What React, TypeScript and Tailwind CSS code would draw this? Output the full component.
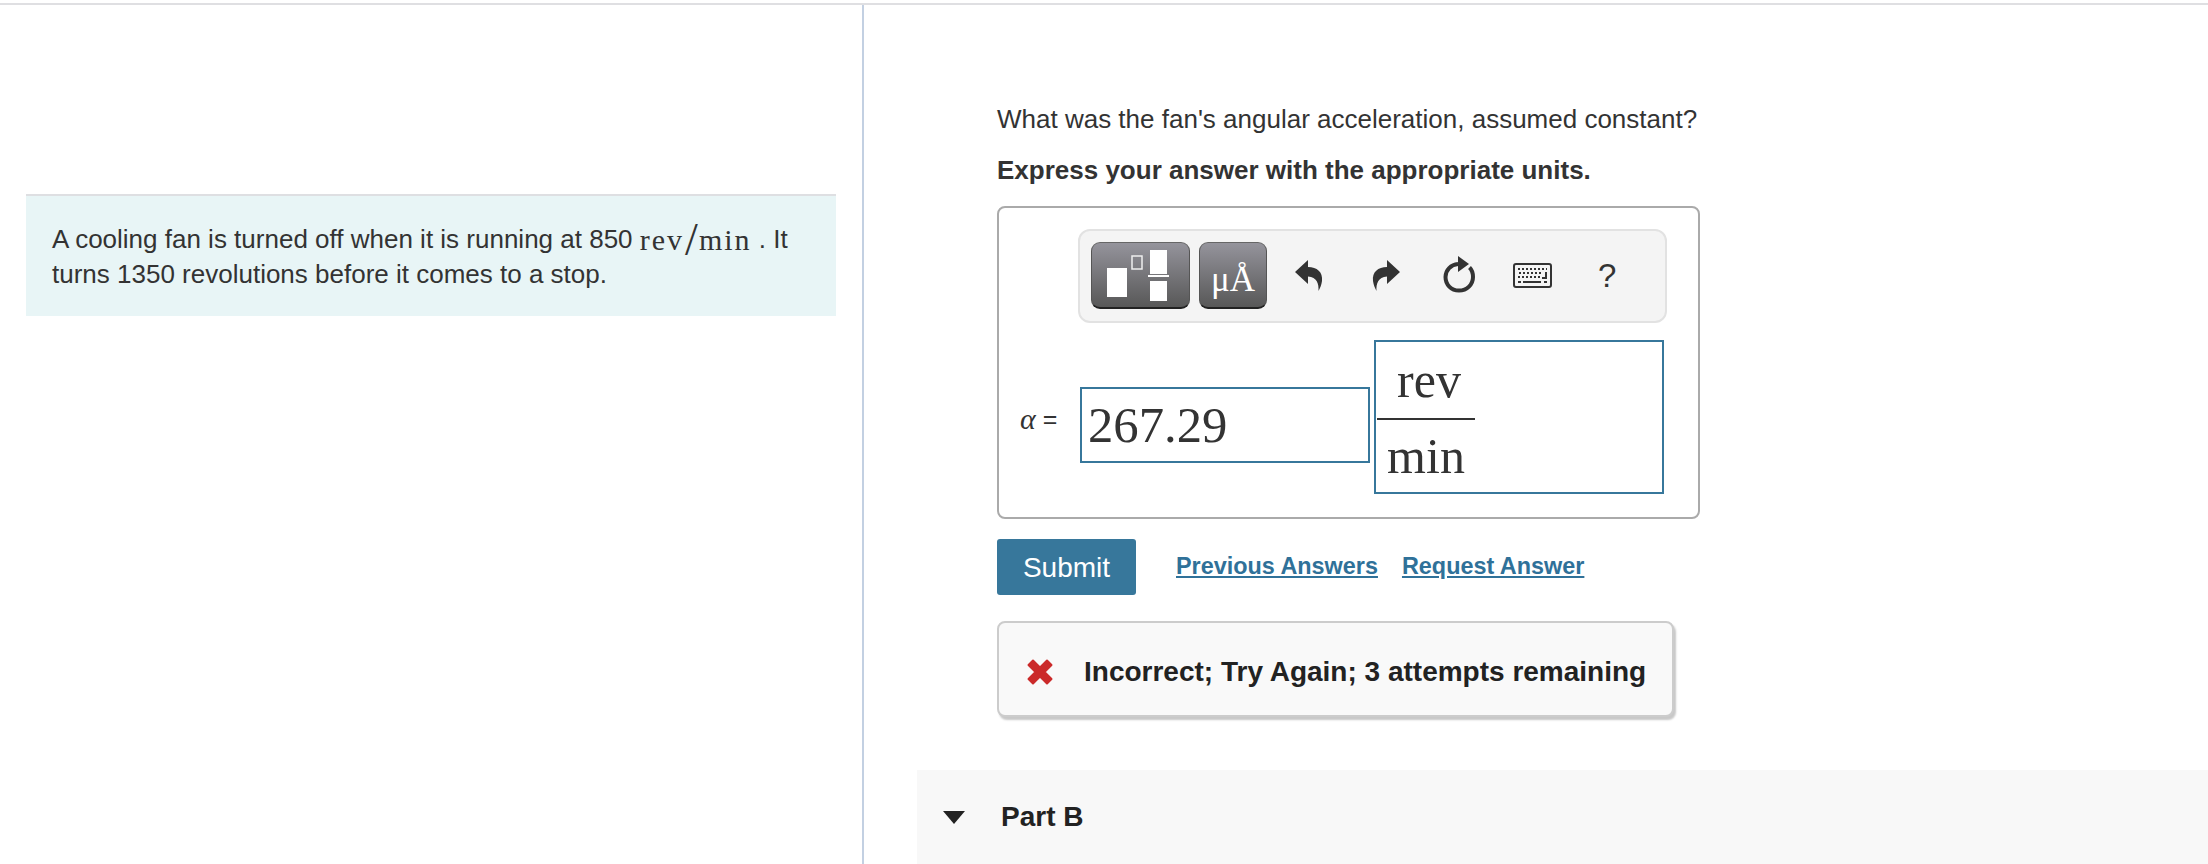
export default function App() {
  return (
    <div className="w-[2208px] h-[864px] overflow-hidden bg-white text-[#333] font-['Liberation_Sans',Arial,sans-serif] flex flex-col">
      <div className="h-[2px] shrink-0 mt-[3px] bg-[#dfdfe2]" />
      <div className="flex flex-1 min-h-0">
        <aside className="w-[864px] shrink-0 border-r-2 border-[#c3d0e2] pt-[189px] pl-[26px] pr-[26px]">
          <div className="border-t-2 border-[#dedfe2] bg-[#e8f5f6] h-[122px] pl-[26px] pr-[20px] pt-[26px] text-[26px] leading-[35px]">
            <div className="flex items-center h-[35px] whitespace-nowrap">
              A cooling fan is turned off when it is running at 850&nbsp;
              <span className="font-['Liberation_Serif',serif] text-[30px] tracking-[2px]">rev</span>
              <span className="font-['Liberation_Serif',serif] text-[46px] font-light leading-[35px] mx-[1px]">/</span>
              <span className="font-['Liberation_Serif',serif] text-[30px] tracking-[2px]">min</span>
              &nbsp;. It
            </div>
            <div>turns 1350 revolutions before it comes to a stop.</div>
          </div>
        </aside>
        <main className="flex-1 min-w-0 flex flex-col">
          <div className="pl-[133px] pt-[98px]">
            <p className="text-[26px] leading-[32px] h-[32px]">What was the fan's angular acceleration, assumed constant?</p>
            <p className="text-[26px] leading-[32px] h-[32px] font-bold mt-[19px]">Express your answer with the appropriate units.</p>

            <div className="mt-[20px] w-[703px] h-[313px] border-2 border-[#aaa] rounded-[8px] pt-[21px]">
              <div className="ml-[79px] w-[589px] h-[94px] bg-[#f4f4f4] border-2 border-[#e2e2e2] rounded-[12px] flex items-center pl-[11px] pb-[2px]">
                <div className="w-[99px] h-[67px] rounded-[9px] border-b-2 border-b-[#222] border-x border-x-[#555] border-t border-t-[#666] bg-gradient-to-b from-[#95949c] to-[#585858] shrink-0">
                  <svg width="97" height="64" viewBox="0 0 97 64">
                    <rect x="15" y="25" width="20" height="29" fill="#fff" />
                    <rect x="40" y="13" width="10" height="13" fill="none" stroke="#eee" strokeWidth="1.5" />
                    <rect x="58" y="7" width="17" height="24" fill="#fff" />
                    <rect x="56" y="32" width="21" height="2" fill="#fff" />
                    <rect x="58" y="38" width="17" height="20" fill="#fff" />
                  </svg>
                </div>
                <div className="ml-[9px] w-[68px] h-[67px] rounded-[9px] border-b-2 border-b-[#222] border-x border-x-[#555] border-t border-t-[#666] bg-gradient-to-b from-[#95949c] to-[#585858] shrink-0 flex items-end justify-center pb-[8px] text-white font-['Liberation_Serif',serif] text-[35px] leading-[38px]">
                  <span>μÅ</span>
                </div>
                <svg className="ml-[28px] shrink-0" width="28" height="32" viewBox="0 0 28 32">
                  <path d="M0 13 L13 1 V8 C22 8 28 13 27 22 C26.5 26 25 29 23.5 32 C24 25 22 18 13 17.5 V25 Z" fill="#333" />
                </svg>
                <svg className="ml-[49px] shrink-0" width="28" height="32" viewBox="0 0 28 32">
                  <path d="M28 13 L15 1 V8 C6 8 0 13 1 22 C1.5 26 3 29 4.5 32 C4 25 6 18 15 17.5 V25 Z" fill="#333" />
                </svg>
                <svg className="ml-[42px] shrink-0" width="34" height="38" viewBox="0 0 34 38">
                  <path d="M27.5 11.5 C30 14 31 17.5 31 21 C31 28.5 25 34.5 17 34.5 C9 34.5 3.5 28.5 3.5 21 C3.5 14 9 8.5 16 8" fill="none" stroke="#333" strokeWidth="4" />
                  <path d="M16 0 L27 8 L16 16 Z" fill="#333" />
                </svg>
                <svg className="ml-[37px] shrink-0" width="39" height="25" viewBox="0 0 39 25">
                  <rect x="1" y="1" width="37" height="23" rx="2" fill="none" stroke="#333" strokeWidth="2" />
                  <path d="M5 6h2M9 6h2M13 6h2M17 6h2M21 6h2M25 6h2M29 6h2M33 6h1M6 10h2M10 10h2M14 10h2M18 10h2M22 10h2M26 10h2M5 14h2M9 14h2M13 14h2M17 14h2M21 14h2M25 14h2M5 19h3M10 19h18M31 19h3" stroke="#333" strokeWidth="2" fill="none" />
                  <path d="M33 9v6h-4" stroke="#333" strokeWidth="2" fill="none" />
                </svg>
                <span className="ml-[46px] text-[33px] leading-none text-[#333] font-['Liberation_Sans',sans-serif]">?</span>
              </div>

              <div className="mt-[17px] flex items-center">
                <span className="ml-[21px] w-[60px] shrink-0 text-[25px] leading-none whitespace-nowrap mt-[4px] flex items-center gap-[7px]">
                  <span className="font-['Liberation_Serif',serif] italic text-[30px]">α</span>
                  <span>=</span>
                </span>
                <div className="w-[290px] h-[76px] mt-[16px] border-2 border-[#37779b] flex items-center pl-[6px] font-['Liberation_Serif',serif] text-[50.7px] shrink-0">
                  267.29
                </div>
                <div className="ml-[4px] w-[290px] h-[154px] border-2 border-[#37779b] font-['Liberation_Serif',serif] text-[50px] pl-[1px] shrink-0">
                  <div className="w-[98px] flex flex-col">
                    <div className="h-[76px] flex items-center justify-center pl-[6px]">rev</div>
                    <div className="h-[2px] bg-[#333]" />
                    <div className="h-[72px] flex items-center justify-center">min</div>
                  </div>
                </div>
              </div>
            </div>

            <div className="mt-[20px] flex items-center">
              <div className="w-[139px] h-[56px] bg-[#37779b] rounded-[3px] text-white text-[28px] flex items-center justify-center pt-[1px]">Submit</div>
              <a className="ml-[40px] text-[#2f7199] text-[23.4px] font-bold underline">Previous Answers</a>
              <a className="ml-[24px] text-[#2f7199] text-[23.4px] font-bold underline">Request Answer</a>
            </div>

            <div className="mt-[26px] w-[677px] h-[96px] bg-[#f9f9f9] border-2 border-[#cccccc] rounded-[8px] shadow-[2px_3px_2px_#c8c8c8] flex items-center pl-[26px] pt-[6px]">
              <svg width="30" height="30" viewBox="0 0 30 30">
                <path d="M3.5 8 L8 3.5 L15 10.5 L22 3.5 L26.5 8 L19.5 15 L26.5 22 L22 26.5 L15 19.5 L8 26.5 L3.5 22 L10.5 15 Z" fill="#cb2a2a" stroke="#cb2a2a" strokeWidth="2" strokeLinejoin="round" />
              </svg>
              <span className="ml-[29px] font-bold text-[28px] text-[#222] whitespace-nowrap">Incorrect; Try Again; 3 attempts remaining</span>
            </div>
          </div>

          <div className="ml-[53px] mt-[53px] flex-1 bg-[#f8f8f8] flex items-center pl-[26px]">
            <svg width="22" height="13" viewBox="0 0 22 13"><path d="M0 0 H22 L11 13 Z" fill="#222" /></svg>
            <span className="ml-[36px] font-bold text-[28px] text-[#222]">Part B</span>
          </div>
        </main>
      </div>
    </div>
  );
}
